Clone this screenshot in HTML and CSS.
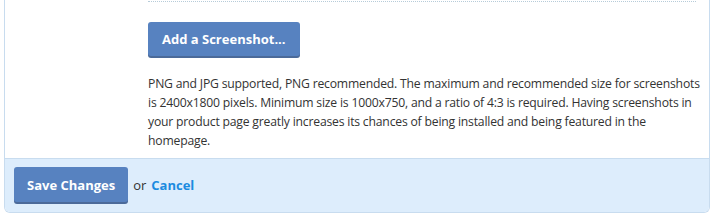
FILE: index.html
```html
<!DOCTYPE html>
<html lang="en">
<head>
  <meta charset="UTF-8" />
  <title>Product Screenshots</title>
  <link rel="stylesheet" href="styles.css">
</head>
<body>
  <div class="panel">
    <div class="form-body">
      <div class="divider"></div>
      <div class="field">
        <button class="btn" type="button">Add a Screenshot...</button>
        <p class="hint">PNG and JPG supported, PNG recommended. The maximum and recommended size for screenshots is 2400x1800 pixels. Minimum size is 1000x750, and a ratio of 4:3 is required. Having screenshots in your product page greatly increases its chances of being installed and being featured in the homepage.</p>
      </div>
    </div>
    <div class="actions">
      <button class="btn btn-save" type="submit">Save Changes</button>
      <span class="or">or</span>
      <a href="#" class="cancel">Cancel</a>
    </div>
  </div>
</body>
</html>
```

FILE: styles.css
```css
body {
  margin: 0;
  font-family: "Open Sans", "Liberation Sans", sans-serif;
  font-size: 13px;
  color: #333;
  background: #fff;
}
.panel {
  margin-left: 4px;
  width: 704px;
  border: 1px solid #c8dcef;
  border-top: none;
  border-radius: 0 0 6px 6px;
  overflow: hidden;
}
.form-body {
  padding: 1px 13px 8px 143px;
}
.divider {
  border-top: 1px dotted #b7ccd9;
}
.field {
  padding-top: 20px;
}
.btn {
  display: inline-block;
  font-family: inherit;
  font-size: 13px;
  font-weight: bold;
  color: #fff;
  background: #5782c0;
  border: none;
  border-radius: 3px;
  box-shadow: 0 2px 0 #4b6a99;
  height: 34px;
  padding: 0 14px;
  cursor: pointer;
}
.hint {
  margin: 18px 0 0;
  width: 558px;
  font-size: 12.2px;
  line-height: 19px;
  letter-spacing: -0.2px;
}
.actions {
  display: flex;
  align-items: center;
  gap: 5px;
  background: #ddedfc;
  border-top: 1px solid #c8dcef;
  padding: 8px 9px 10px;
}
.btn-save {
  height: 35px;
  padding: 0 13px;
  font-size: 13px;
}
.or {
  color: #333;
}
.cancel {
  color: #1b8be0;
  font-weight: bold;
  text-decoration: none;
}
```
